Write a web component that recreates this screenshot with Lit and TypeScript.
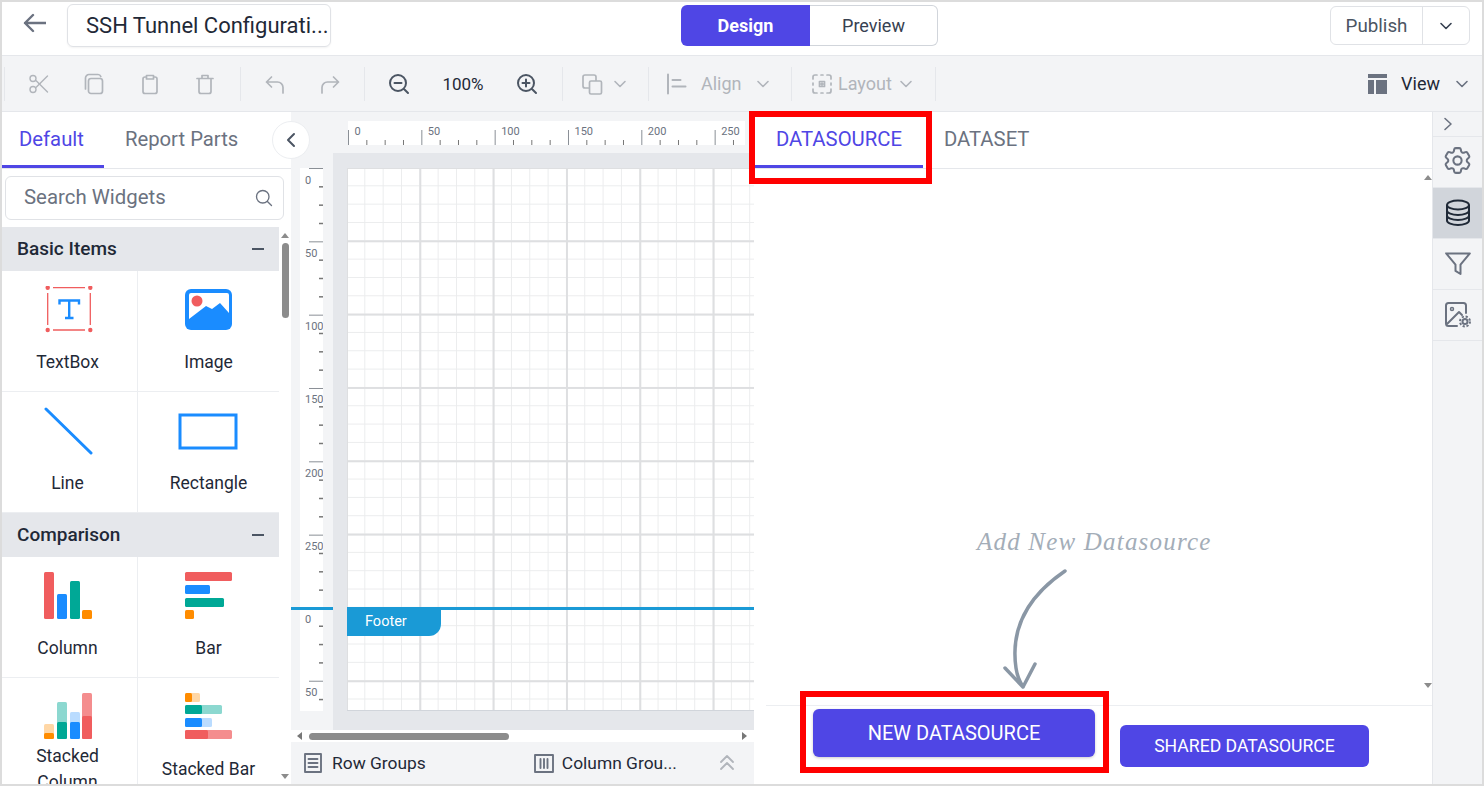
import { LitElement, html, svg, css } from "lit";
import { customElement } from "lit/decorators.js";

const line = (d: string, w = 1.7, size = 24) => html`<svg width=${size} height=${size} viewBox="0 0 24 24" fill="none" stroke="currentColor" stroke-width=${w} stroke-linecap="round" stroke-linejoin="round">${svg`<path d=${d} />`}</svg>`;

const chevron = html`<svg class="chev" width="14" height="14" viewBox="0 0 14 14" fill="none" stroke="currentColor" stroke-width="1.6" stroke-linecap="round" stroke-linejoin="round"><path d="M2 4.5 7 9.5 12 4.5" /></svg>`;

const GEAR = "M9.594 3.94c.09-.542.56-.94 1.11-.94h2.593c.55 0 1.02.398 1.11.94l.213 1.281c.063.374.313.686.645.87.074.04.147.083.22.127.325.196.72.257 1.075.124l1.217-.456a1.125 1.125 0 0 1 1.37.49l1.296 2.247a1.125 1.125 0 0 1-.26 1.431l-1.003.827c-.293.241-.438.613-.43.992a7.723 7.723 0 0 1 0 .255c-.008.378.137.75.43.991l1.004.827c.424.35.534.955.26 1.43l-1.298 2.247a1.125 1.125 0 0 1-1.369.491l-1.217-.456c-.355-.133-.75-.072-1.076.124a6.47 6.47 0 0 1-.22.128c-.331.183-.581.495-.644.869l-.213 1.281c-.09.543-.56.94-1.11.94h-2.594c-.55 0-1.019-.398-1.11-.94l-.213-1.281c-.062-.374-.312-.686-.644-.87a6.52 6.52 0 0 1-.22-.127c-.325-.196-.72-.257-1.076-.124l-1.217.456a1.125 1.125 0 0 1-1.369-.49l-1.297-2.247a1.125 1.125 0 0 1 .26-1.431l1.004-.827c.292-.24.437-.613.43-.991a6.932 6.932 0 0 1 0-.255c.007-.38-.138-.751-.43-.992l-1.004-.827a1.125 1.125 0 0 1-.26-1.43l1.297-2.247a1.125 1.125 0 0 1 1.37-.491l1.216.456c.356.133.751.072 1.076-.124.072-.044.146-.086.22-.128.332-.183.582-.495.644-.869l.214-1.28ZM15 12a3 3 0 1 1-6 0 3 3 0 0 1 6 0Z";

const icons = {
  scissors: line("M8.7 8.2 20.5 20M20.5 4 8.7 15.8M9 6.5a3 3 0 1 1-6 0 3 3 0 0 1 6 0ZM9 17.5a3 3 0 1 1-6 0 3 3 0 0 1 6 0Z", 1.4),
  copy: line("M9 6.500h9a2.500 2.500 0 0 1 2.500 2.500v10a2.500 2.500 0 0 1-2.500 2.500H9A2.500 2.500 0 0 1 6.500 19V9A2.500 2.500 0 0 1 9 6.500ZM3.500 17V6a3.500 3.500 0 0 1 3.500-3.500h9a3 3 0 0 1 2.800 2"),
  paste: line("M8.500 5H7a2 2 0 0 0-2 2v12.500a2 2 0 0 0 2 2h10a2 2 0 0 0 2-2V7a2 2 0 0 0-2-2h-1.500M8.500 3.500h7v3.500h-7Z"),
  trash: line("M4 6.500h16M9 6V3.500h6V6M6 6.500v13a2 2 0 0 0 2 2h8a2 2 0 0 0 2-2v-13"),
  undo: line("M8.500 5 3.500 10l5 5M3.500 10h11a5.500 5.500 0 0 1 5.500 5.500V21"),
  redo: line("M15.500 5l5 5-5 5M20.500 10h-11A5.500 5.500 0 0 0 4 15.500V21"),
  zoomOut: line("M19 11a8 8 0 1 1-16 0 8 8 0 0 1 16 0ZM21 21l-4.300-4.300M7.500 11h7", 2),
  zoomIn: line("M19 11a8 8 0 1 1-16 0 8 8 0 0 1 16 0ZM21 21l-4.300-4.300M7.500 11h7M11 7.500v7", 2),
  duplicate: line("M8 16H5a2 2 0 0 1-2-2V5a2 2 0 0 1 2-2h9a2 2 0 0 1 2 2v3M11 9h9a1.500 1.500 0 0 1 1.500 1.500v10a1.500 1.500 0 0 1-1.500 1.500h-9a1.500 1.500 0 0 1-1.500-1.500v-10A1.500 1.500 0 0 1 11 9Z"),
  align: line("M3 2.500v19M7.500 8h8M7.500 14.500h13", 2),
  layout: line("M3 7V5a2 2 0 0 1 2-2h2M17 3h2a2 2 0 0 1 2 2v2M21 17v2a2 2 0 0 1-2 2h-2M7 21H5a2 2 0 0 1-2-2v-2M11 3h2M11 21h2M3 11v2M21 11v2M9.500 9.500h5v5h-5ZM12 11v2M11 12h2"),
  gear: line(GEAR, 1.5, 33),
  filter: line("M2.500 3.500h19l-7.500 9v7.500l-4-2.500v-5Z", 1.6, 30),
  search: line("M18 10.500a7.500 7.500 0 1 1-15 0 7.500 7.500 0 0 1 15 0ZM21 21l-5.200-5.200", 1.6),
};

const database = html`<svg width="26" height="28" viewBox="0 0 26 28" fill="none" stroke="currentColor" stroke-width="2" stroke-linecap="round" stroke-linejoin="round"><path d="M24 6c0 2.500-5 4.500-11 4.500S2 8.500 2 6s5-4.500 11-4.500S24 3.500 24 6ZM2 6v15.500C2 24 7 26 13 26s11-2 11-4.500V6M2 11.500C2 14 7 16 13 16s11-2 11-4.500M2 16.500C2 19 7 21 13 21s11-2 11-4.500" /></svg>`;

const imageGear = html`<svg width="28" height="28" viewBox="0 0 28 28" fill="none" stroke="currentColor" stroke-width="2" stroke-linecap="round" stroke-linejoin="round">
  <path d="M13 25H4.500A2.500 2.500 0 0 1 2 22.500V4.500A2.500 2.500 0 0 1 4.500 2h15A2.500 2.500 0 0 1 22 4.500V12M3 23 15 11l3 3" />
  <circle cx="8" cy="8" r="1.500" stroke-width="1.500" />
  <circle cx="21" cy="20.500" r="2.500" stroke-width="2" />
  <circle cx="21" cy="20.500" r="5" stroke-width="2" stroke-dasharray="2.200 1.730" stroke-linecap="butt" />
</svg>`;

const TICK = 73.33 / 4;

@customElement("widget-cell")
class WidgetCell extends LitElement {
  static properties = { label: { type: String } };
  label = "";
  static styles = css`
    :host {
      display: flex;
      flex-direction: column;
      align-items: center;
      padding-top: 15px;
      box-sizing: border-box;
      border-bottom: 1px solid #eceef1;
    }
    :host(:nth-child(odd)) {
      border-right: 1px solid #eceef1;
      padding-right: 4px;
    }
    .label {
      margin-top: 14px;
      width: 100px;
      height: 24px;
      display: flex;
      align-items: center;
      justify-content: center;
      text-align: center;
      font-size: 17.5px;
      line-height: 26px;
      color: #1f2937;
    }
  `;
  render() {
    return html`<slot></slot><div class="label"><span>${this.label}</span></div>`;
  }
}

@customElement("app-root")
class AppRoot extends LitElement {
  static styles = css`
    :host {
      display: block;
      font-family: Roboto, "Liberation Sans", sans-serif;
      color: #1f2937;
    }
    * {
      box-sizing: border-box;
    }
    .frame {
      position: relative;
      width: 1484px;
      height: 786px;
      border: 2px solid #dcdcdc;
      display: flex;
      flex-direction: column;
      overflow: hidden;
      background: #fff;
    }
    .header {
      height: 54px;
      flex: none;
      display: flex;
      align-items: flex-start;
      padding-left: 20px;
      border-bottom: 1px solid #e5e7eb;
    }
    .back {
      color: #6b7280;
      margin-top: 9px;
      height: 24px;
      width: 29px;
    }
    .name {
      margin: 2px 0 0 16px;
      width: 264px;
      height: 43px;
      border: 1px solid #e0e2e6;
      border-radius: 6px;
      padding-left: 18px;
      font-size: 22px;
      line-height: 41px;
      color: #1f2937;
      white-space: nowrap;
      box-shadow: 0 1px 2px rgba(0, 0, 0, 0.05);
    }
    .toggle {
      margin: 3px 0 0 350px;
      display: flex;
      height: 41px;
      font-size: 18px;
    }
    .toggle div {
      display: flex;
      align-items: center;
      justify-content: center;
    }
    .toggle .on {
      width: 129px;
      background: #4f46e5;
      color: #fff;
      font-weight: 700;
      border-radius: 6px 0 0 6px;
    }
    .toggle .off {
      width: 128px;
      border: 1px solid #d1d5db;
      border-left: none;
      border-radius: 0 6px 6px 0;
      color: #374151;
    }
    .publish {
      margin: 4px 12px 0 auto;
      width: 140px;
      height: 39px;
      display: flex;
      border: 1px solid #e0e2e6;
      border-radius: 6px;
      font-size: 18.8px;
      color: #4b5563;
    }
    .publish div {
      display: flex;
      align-items: center;
      justify-content: center;
    }
    .publish .txt {
      width: 92px;
      border-right: 1px solid #e0e2e6;
    }
    .publish .more {
      flex: 1;
      color: #374151;
    }
    .toolbar {
      height: 56px;
      flex: none;
      display: flex;
      align-items: center;
      background: #f3f4f6;
      border-bottom: 1px solid #e5e7eb;
      color: #b1b5bb;
      font-size: 18px;
    }
    .group {
      display: flex;
      align-items: center;
      height: 34px;
      border-left: 1px solid #e5e7eb;
    }
    .g1 {
      margin-left: 2px;
      width: 236px;
      padding-left: 6px;
    }
    .g2 {
      width: 124px;
      padding-left: 6px;
    }
    .g3 {
      width: 198px;
      padding-left: 2px;
      color: #4b5563;
    }
    .g4 {
      width: 86px;
      padding-left: 17px;
    }
    .g5 {
      width: 143px;
      padding-left: 16px;
    }
    .g6 {
      width: 144px;
      padding-left: 18px;
    }
    .g7 {
      flex: 1;
    }
    .tool {
      width: 55.5px;
      display: flex;
      justify-content: center;
    }
    .g3 .tool {
      width: 64px;
    }
    .zoom {
      color: #1f2937;
      font-size: 17px;
    }
    .g4 .chev {
      margin-left: 9px;
    }
    .g5 span {
      margin-left: 12px;
    }
    .g5 .chev {
      margin-left: 14px;
    }
    .g6 span {
      margin-left: 4px;
    }
    .g6 .chev {
      margin-left: 7px;
    }
    .view {
      display: flex;
      align-items: center;
      padding-right: 13px;
      color: #1f2937;
    }
    .view .chev {
      margin-left: 15px;
      color: #6b7280;
    }
    .view span {
      margin-left: 13px;
    }
    .body {
      flex: 1;
      min-height: 0;
      display: flex;
    }
    .left {
      position: relative;
      width: 289px;
      flex: none;
      display: flex;
      flex-direction: column;
    }
    .tabs {
      height: 57px;
      flex: none;
      display: flex;
      border-bottom: 1px solid #e5e7eb;
      font-size: 20.3px;
      color: #6b7280;
    }
    .right .tabs {
      padding-left: 1px;
    }
    .tab {
      height: 56px;
      padding: 0 21px;
      line-height: 55px;
      white-space: nowrap;
    }
    .left .tab:first-child {
      padding: 0 20px 0 17px;
    }
    .tab.active {
      color: #4f46e5;
      border-bottom: 3px solid #4f46e5;
    }
    .collapse {
      position: absolute;
      left: 270px;
      top: 9px;
      width: 38px;
      height: 38px;
      border-radius: 50%;
      background: #fff;
      border: 1px solid #eceef1;
      display: flex;
      align-items: center;
      justify-content: center;
      color: #4b5563;
      z-index: 2;
    }
    .search {
      margin: 7px 7px 7px 3px;
      height: 44px;
      flex: none;
      border: 1px solid #e0e2e6;
      border-radius: 6px;
      display: flex;
      align-items: center;
      justify-content: space-between;
      padding: 0 9px 2px 18px;
      font-size: 20.4px;
      color: #6b7280;
    }
    .search svg {
      width: 20px;
      height: 20px;
      margin-top: 2px;
    }
    .lists {
      flex: 1;
      min-height: 0;
      display: flex;
    }
    .list {
      width: 277px;
      overflow: hidden;
    }
    .section {
      height: 44px;
      background: #e5e7eb;
      display: flex;
      align-items: center;
      justify-content: space-between;
      padding: 0 15px 1px;
      font-size: 19px;
      font-weight: 500;
      color: #1f2937;
    }
    .section i {
      width: 12px;
      height: 2px;
      background: #4b5563;
    }
    .grid {
      display: grid;
      grid-template-columns: 136px 141px;
      grid-auto-rows: 121px;
    }
    .vbar {
      flex: 1;
      display: flex;
      flex-direction: column;
      align-items: center;
      padding: 6px 0 5px;
    }
    .vbar .thumb {
      width: 7px;
      height: 75px;
      border-radius: 4px;
      background: #8c8c8c;
      margin: 5px 0 auto;
    }
    .up {
      width: 0;
      height: 0;
      border: 4px solid transparent;
      border-top: none;
      border-bottom: 5px solid #8c8c8c;
    }
    .down {
      width: 0;
      height: 0;
      border: 4px solid transparent;
      border-bottom: none;
      border-top: 5px solid #8c8c8c;
    }
    .center {
      position: relative;
      width: 463px;
      flex: none;
      display: flex;
      flex-direction: column;
      background: #f3f4f6;
    }
    .canvas {
      position: relative;
      flex: 1;
      min-height: 0;
      display: flex;
      flex-direction: column;
      overflow: hidden;
    }
    .hruler {
      display: block;
      flex: none;
      margin: 9px 0 8px 57px;
      background: #fff;
    }
    .stage {
      flex: 1;
      min-height: 0;
      display: flex;
    }
    .vcol {
      width: 42px;
      flex: none;
      padding: 15px 0 0 9px;
    }
    .vruler {
      display: block;
      background: #fff;
    }
    .surface {
      flex: 1;
      background: #e5e7eb;
      padding: 15px 0 19px 14px;
      display: flex;
    }
    .page {
      position: relative;
      flex: 1;
      background-color: #fff;
      background-image: linear-gradient(to right, #dedfe1 2px, transparent 2px),
        linear-gradient(to bottom, #dedfe1 2px, transparent 2px),
        linear-gradient(to right, #ebeced 1px, transparent 1px),
        linear-gradient(to bottom, #ebeced 1px, transparent 1px);
      background-size: 73.33px 73.33px, 73.33px 73.33px, 18.33px 18.33px, 18.33px 18.33px;
      background-position: -1px -1px;
      border-bottom: 1px solid #d1d5db;
    }
    .band {
      position: absolute;
      left: 0;
      right: 0;
      top: 439px;
      height: 3px;
      background: #1a9ad6;
    }
    .tag {
      position: absolute;
      left: 0;
      top: 439px;
      width: 94px;
      height: 29px;
      background: #1a9ad6;
      border-radius: 0 0 12px 0;
      color: #fff;
      font-size: 14.5px;
      line-height: 29px;
      padding-left: 18px;
    }
    .stub {
      position: absolute;
      left: 0;
      top: 495px;
      width: 42px;
      height: 3px;
      background: #1a9ad6;
    }
    .hbar {
      height: 12px;
      flex: none;
      background: #fff;
      display: flex;
      align-items: center;
      padding: 0 7px 0 6px;
    }
    .hbar .thumb {
      width: 200px;
      height: 7px;
      border-radius: 4px;
      background: #8c8c8c;
      margin: 0 auto 0 7px;
    }
    .lt {
      width: 0;
      height: 0;
      border: 4px solid transparent;
      border-left: none;
      border-right: 5px solid #777;
    }
    .rt {
      width: 0;
      height: 0;
      border: 4px solid transparent;
      border-right: none;
      border-left: 5px solid #777;
    }
    .groups {
      height: 42px;
      flex: none;
      display: flex;
      align-items: center;
      padding-left: 10px;
      font-size: 17.4px;
      color: #1f2937;
    }
    .groups .g {
      display: flex;
      align-items: center;
      gap: 7px;
      white-space: nowrap;
    }
    .groups .g svg {
      color: #6b7280;
    }
    .groups .second {
      margin-left: 106px;
      gap: 6px;
    }
    .groups .dbl {
      margin-left: 42px;
      color: #b1b5bb;
      display: flex;
    }
    .right {
      width: 678px;
      flex: none;
      display: flex;
      flex-direction: column;
    }
    .content {
      flex: 1;
      min-height: 0;
      margin: 0 0 0 12px;
      border-bottom: 1px solid #eceef1;
      display: flex;
      flex-direction: column;
      justify-content: flex-end;
      position: relative;
    }
    .content .up,
    .content .down {
      position: absolute;
      right: 0;
    }
    .content .up {
      top: 6px;
    }
    .content .down {
      bottom: 17px;
    }
    .hint-text {
      margin-left: 211px;
      width: 240px;
      font-family: "Liberation Serif", serif;
      font-style: italic;
      font-size: 25px;
      line-height: 30px;
      letter-spacing: 1.2px;
      color: #a3adb8;
      white-space: nowrap;
    }
    .arrow {
      display: block;
      margin: 11px 0 15px 235px;
    }
    .actions {
      height: 78px;
      flex: none;
      display: flex;
      align-items: flex-start;
      padding-left: 59px;
    }
    .btn {
      border: none;
      background: #4f46e5;
      color: #fff;
      border-radius: 6px;
      font-family: inherit;
      display: flex;
      align-items: center;
      justify-content: center;
    }
    .btn.new {
      width: 282px;
      height: 48px;
      margin-top: 3px;
      font-size: 20px;
      box-shadow: 0 1px 3px rgba(0, 0, 0, 0.2);
    }
    .btn.shared {
      width: 249px;
      height: 42px;
      margin: 19px 0 0 25px;
      font-size: 17.6px;
    }
    .side {
      flex: 1;
      background: #f3f4f6;
      border-left: 1px solid #e5e7eb;
      display: flex;
      flex-direction: column;
      color: #6b7280;
    }
    .side .top {
      height: 25px;
      display: flex;
      align-items: center;
      padding-left: 8px;
      border-bottom: 1px solid #e5e7eb;
    }
    .side .it {
      height: 51px;
      display: flex;
      align-items: center;
      justify-content: center;
      border-bottom: 1px solid #e5e7eb;
    }
    .side .it.first {
      padding-bottom: 3px;
    }
    .side .it.active {
      background: #d1d5db;
      color: #1f2937;
    }
    .mark {
      position: absolute;
      border: 6px solid #ff0000;
      z-index: 3;
    }
    .m1 {
      left: 747px;
      top: 109px;
      width: 183px;
      height: 73px;
    }
    .m2 {
      left: 798px;
      top: 689px;
      width: 309px;
      height: 82px;
    }
  `;

  private hRuler() {
    const marks = [0, 50, 100, 150, 200, 250];
    return html`<svg class="hruler" width="397" height="24" font-size="11" font-family="Roboto, sans-serif">
      ${marks.map((m, i) => {
        const x = i * 73.33 + 0.5;
        return svg`<path d="M${x} 9V24" stroke="#8a8f96" stroke-width="1" />
          <text x=${x + 6} y="14" fill="#6b7280">${m}</text>
          ${[1, 2, 3].map((n) => svg`<path d="M${x + n * TICK} 19V24" stroke="#777" stroke-width="1" />`)}`;
      })}
    </svg>`;
  }

  private vRuler() {
    const runs = [
      { y0: 0.5, marks: [0, 50, 100, 150, 200, 250] },
      { y0: 439.9, marks: [0, 50] },
    ];
    return html`<svg class="vruler" width="23" height="543" font-size="11" font-family="Roboto, sans-serif">
      ${runs.map((r) =>
        r.marks.map((m, i) => {
          const y = r.y0 + i * 73.33;
          return svg`<path d="M9 ${y}H23" stroke="#8a8f96" stroke-width="1" />
            <text x="5" y=${y + 15} fill="#6b7280">${m}</text>
            ${[1, 2, 3].map((n) => (y + n * TICK < 543 ? svg`<path d="M19 ${y + n * TICK}H23" stroke="#777" stroke-width="1.500" />` : ""))}`;
        })
      )}
    </svg>`;
  }

  private widgets() {
    const B = "#1a8cff", R = "#f05d5e", T = "#00a896", O = "#ff8c00";
    const bar = (x: number, y: number, w: number, h: number, c: string, o = 1) =>
      svg`<rect x=${x} y=${y} width=${w} height=${h} rx="1.500" fill=${c} opacity=${o} />`;
    const frame = (content: unknown) =>
      html`<svg width="62" height="50" viewBox="0 0 62 50">${content}</svg>`;
    return {
      textbox: frame(svg`
        <path d="M16 1.700H48M16 44H48M10.700 7V39M53.300 7V39" fill="none" stroke=${R} stroke-width="1.300" />
        <g fill=${R}><circle cx="10.700" cy="1.700" r="2.200" /><circle cx="53.300" cy="1.700" r="2.200" /><circle cx="10.700" cy="44" r="2.200" /><circle cx="53.300" cy="44" r="2.200" /></g>
        <path d="M22.500 18.500V14.500H42V18.500M32.200 14.500V32M28 32H36.500" fill="none" stroke=${B} stroke-width="2.400" />`),
      image: frame(svg`
        <rect x="7" y="3" width="47" height="41" rx="6" fill=${B} />
        <path d="M11 33V9a2 2 0 0 1 2-2H49a2 2 0 0 1 2 2V27L42 17 34 23 28 20Z" fill="#fff" />
        <circle cx="19" cy="15" r="5.500" fill=${R} />`),
      line: frame(svg`<path d="M9 2 54 46" stroke=${B} stroke-width="3" stroke-linecap="round" />`),
      rect: frame(svg`<rect x="2" y="8" width="56" height="33" fill="none" stroke=${B} stroke-width="3" />`),
      column: frame(svg`${bar(7, 0, 10, 47, R)}${bar(20, 22, 10, 25, B)}${bar(33, 9, 10, 38, T)}${bar(45, 38, 10, 9, O)}`),
      bar: frame(svg`${bar(7, 0, 47, 9, R)}${bar(7, 13, 25, 9, B)}${bar(7, 26, 39, 9, T)}${bar(7, 38, 9, 9, O)}`),
      stackedColumn: frame(svg`
        ${bar(7, 31, 10, 15, O, 0.35)}${bar(7, 40, 10, 6, O)}
        ${bar(20, 9, 10, 37, T, 0.45)}${bar(20, 29, 10, 17, T)}
        ${bar(33, 19, 10, 27, B, 0.3)}${bar(33, 29, 10, 17, B)}
        ${bar(45, 0, 10, 46, R, 0.7)}${bar(45, 23, 10, 23, R)}`),
      stackedBar: frame(svg`
        ${bar(7, 0, 15, 9, O, 0.35)}${bar(7, 0, 7, 9, O)}
        ${bar(7, 12, 37, 9, T, 0.45)}${bar(7, 12, 17, 9, T)}
        ${bar(7, 25, 27, 9, B, 0.3)}${bar(7, 25, 17, 9, B)}
        ${bar(7, 37, 47, 9, R, 0.7)}${bar(7, 37, 23, 9, R)}`),
    };
  }

  render() {
    const w = this.widgets();
    return html`
      <div class="frame">
        <div class="header">
          <div class="back">${line("M3 12h21M11 4l-8 8 8 8", 2.4)}</div>
          <div class="name">SSH Tunnel Configurati...</div>
          <div class="toggle"><div class="on">Design</div><div class="off">Preview</div></div>
          <div class="publish"><div class="txt">Publish</div><div class="more">${chevron}</div></div>
        </div>
        <div class="toolbar">
          <div class="group g1">
            <div class="tool">${icons.scissors}</div><div class="tool">${icons.copy}</div>
            <div class="tool">${icons.paste}</div><div class="tool">${icons.trash}</div>
          </div>
          <div class="group g2"><div class="tool">${icons.undo}</div><div class="tool">${icons.redo}</div></div>
          <div class="group g3">
            <div class="tool">${icons.zoomOut}</div><div class="tool zoom">100%</div><div class="tool">${icons.zoomIn}</div>
          </div>
          <div class="group g4">${icons.duplicate}${chevron}</div>
          <div class="group g5">${icons.align}<span>Align</span>${chevron}</div>
          <div class="group g6">${icons.layout}<span>Layout</span>${chevron}</div>
          <div class="group g7"></div>
          <div class="view">
            <svg width="22" height="22" viewBox="0 0 22 22" fill="#6b7280"><rect x="2" y="1" width="19" height="4" /><rect x="2" y="7" width="6" height="14" /><rect x="10" y="7" width="11" height="14" /></svg>
            <span>View</span>${chevron}
          </div>
        </div>
        <div class="body">
          <div class="left">
            <div class="tabs"><div class="tab active">Default</div><div class="tab">Report Parts</div></div>
            <div class="collapse"><svg width="14" height="16" viewBox="0 0 14 16" fill="none" stroke="currentColor" stroke-width="2" stroke-linecap="round" stroke-linejoin="round"><path d="M10 2 4 8 10 14" /></svg></div>
            <div class="search"><span>Search Widgets</span>${icons.search}</div>
            <div class="lists">
              <div class="list">
                <div class="section"><span>Basic Items</span><i></i></div>
                <div class="grid">
                  <widget-cell label="TextBox">${w.textbox}</widget-cell>
                  <widget-cell label="Image">${w.image}</widget-cell>
                  <widget-cell label="Line">${w.line}</widget-cell>
                  <widget-cell label="Rectangle">${w.rect}</widget-cell>
                </div>
                <div class="section"><span>Comparison</span><i></i></div>
                <div class="grid">
                  <widget-cell label="Column">${w.column}</widget-cell>
                  <widget-cell label="Bar">${w.bar}</widget-cell>
                  <widget-cell label="Stacked Column">${w.stackedColumn}</widget-cell>
                  <widget-cell label="Stacked Bar">${w.stackedBar}</widget-cell>
                </div>
              </div>
              <div class="vbar"><div class="up"></div><div class="thumb"></div><div class="down"></div></div>
            </div>
          </div>
          <div class="center">
            <div class="canvas">
              ${this.hRuler()}
              <div class="stage">
                <div class="vcol">${this.vRuler()}</div>
                <div class="surface">
                  <div class="page"><div class="band"></div><div class="tag">Footer</div></div>
                </div>
              </div>
              <div class="stub"></div>
            </div>
            <div class="hbar"><div class="lt"></div><div class="thumb"></div><div class="rt"></div></div>
            <div class="groups">
              <div class="g">${line("M4 3h16v18H4ZM7.500 8h9M7.500 12h9M7.500 16h9", 1.9)}<span>Row Groups</span></div>
              <div class="g second">${line("M3 4h18v17H3ZM8.500 8v9M12 8v9M15.500 8v9", 1.9)}<span>Column Grou...</span></div>
              <div class="dbl"><svg width="16" height="18" viewBox="0 0 16 18" fill="none" stroke="currentColor" stroke-width="1.800" stroke-linecap="round" stroke-linejoin="round"><path d="M2 8 8 2 14 8M2 15 8 9 14 15" /></svg></div>
            </div>
          </div>
          <div class="right">
            <div class="tabs"><div class="tab active">DATASOURCE</div><div class="tab">DATASET</div></div>
            <div class="content">
              <div class="up"></div><div class="down"></div>
              <div class="hint-text">Add New Datasource</div>
              <svg class="arrow" width="70" height="122" viewBox="0 0 70 122" fill="none" stroke="#8a97a5" stroke-width="3.500" stroke-linecap="round" stroke-linejoin="round">
                <path d="M64 3C36 22 8 52 15 100 16 108 19 114 22 119M4 100 22 119 34 96" />
              </svg>
            </div>
            <div class="actions">
              <button class="btn new">NEW DATASOURCE</button>
              <button class="btn shared">SHARED DATASOURCE</button>
            </div>
          </div>
          <div class="side">
            <div class="top"><svg width="14" height="14" viewBox="0 0 14 14" fill="none" stroke="currentColor" stroke-width="1.600" stroke-linecap="round" stroke-linejoin="round"><path d="M4 1.500 10 7 4 12.500" /></svg></div>
            <div class="it first">${icons.gear}</div>
            <div class="it active">${database}</div>
            <div class="it">${icons.filter}</div>
            <div class="it">${imageGear}</div>
          </div>
        </div>
        <div class="mark m1"></div>
        <div class="mark m2"></div>
      </div>
    `;
  }
}
